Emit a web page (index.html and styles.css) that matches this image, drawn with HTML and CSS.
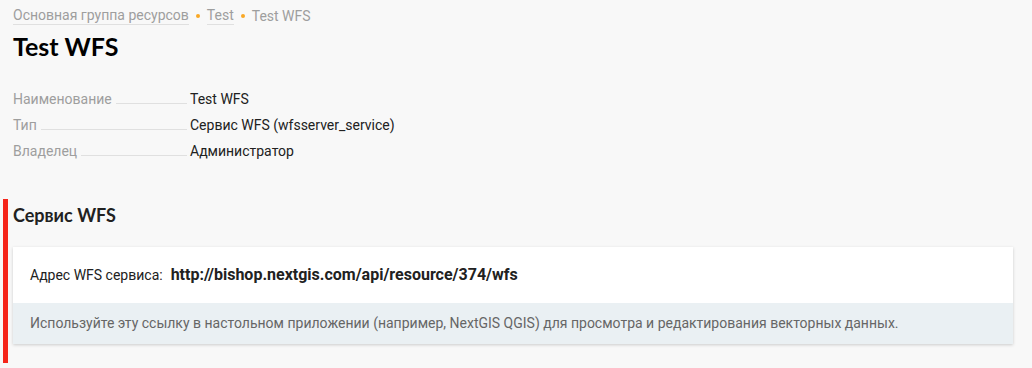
FILE: index.html
```html
<!DOCTYPE html>
<html>
	<head>
		<meta charset="utf-8" />
		<title>Test WFS</title>
		<link rel="stylesheet" href="styles.css">
	</head>
	<body>
		<div class="page">
			<div class="breadcrumbs">
				<a href="#">Основная группа ресурсов</a>
				<span class="sep"></span>
				<a href="#">Test</a>
				<span class="sep"></span>
				<span class="current">Test WFS</span>
			</div>
			<h1>Test WFS</h1>

			<div class="summary">
				<div class="row">
					<div class="key"><span>Наименование</span><i></i></div>
					<div class="value">Test WFS</div>
				</div>
				<div class="row">
					<div class="key"><span>Тип</span><i></i></div>
					<div class="value">Сервис WFS (wfsserver_service)</div>
				</div>
				<div class="row">
					<div class="key"><span>Владелец</span><i></i></div>
					<div class="value">Администратор</div>
				</div>
			</div>
		</div>

		<div class="section">
			<h2>Сервис WFS</h2>
			<div class="card">
				<div class="card-body">
					<span class="label">Адрес WFS сервиса:</span>
					<span class="url">http://bishop.nextgis.com/api/resource/374/wfs</span>
				</div>
				<div class="card-footer">
					Используйте эту ссылку в настольном приложении (например, NextGIS QGIS) для просмотра и редактирования векторных данных.
				</div>
			</div>
		</div>
	</body>
</html>
```

FILE: styles.css
```css
body {
	margin: 0;
	font-family: Roboto, "Liberation Sans", sans-serif;
	font-size: 14px;
	color: #212121;
	background-color: #f8f8f8;
}

.page {
	padding: 6px 19px 0 13px;
}

.breadcrumbs {
	display: flex;
	align-items: center;
	line-height: 20px;
	color: #9e9e9e;
}

.breadcrumbs a {
	color: #9e9e9e;
	text-decoration: none;
	border-bottom: 1px solid #e0e0e0;
	line-height: 17px;
}

.breadcrumbs .sep {
	width: 4px;
	height: 4px;
	margin: 0 7px;
	border-radius: 50%;
	background-color: #f9a825;
}

h1 {
	margin: 4px 0 0;
	font-family: Lato, sans-serif;
	font-size: 25px;
	font-weight: 700;
	line-height: 32px;
	color: #000;
}

.summary {
	margin-top: 24px;
}

.row {
	display: flex;
	line-height: 26px;
}

.key {
	display: flex;
	width: 174px;
	margin-right: 3px;
	color: #9e9e9e;
}

.key i {
	flex: 1;
	margin: 0 0 8px 4px;
	border-bottom: 1px solid #e0e0e0;
}

.section {
	margin: 35px 19px 0 3px;
	padding: 0 0 19px 5px;
	border-left: 5px solid #f5251a;
}

h2 {
	margin: 0;
	padding-top: 4px;
	font-family: Lato, sans-serif;
	font-size: 18px;
	font-weight: 700;
	line-height: 24px;
	color: #212121;
}

.card {
	margin-top: 20px;
	background-color: #fff;
	box-shadow: 0 1px 3px rgba(0, 0, 0, 0.18);
}

.card-body {
	display: flex;
	align-items: baseline;
	height: 56px;
	padding: 0 17px;
	line-height: 56px;
}

.card-body .label {
	font-size: 14px;
	margin-right: 8px;
}

.card-body .url {
	font-size: 16px;
	font-weight: 700;
}

.card-footer {
	padding: 0 17px;
	line-height: 41px;
	color: #666;
	background-color: #eaf0f3;
}
```
